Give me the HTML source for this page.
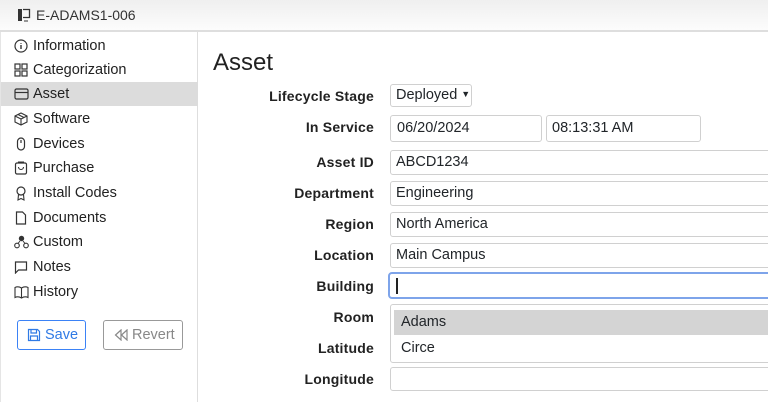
<!DOCTYPE html>
<html><head><style>
*{box-sizing:border-box;margin:0;padding:0}
body{width:768px;height:402px;overflow:hidden;background:#fff;font-family:"Liberation Sans",sans-serif;color:#212529;position:relative}
.hdr{position:absolute;left:0;top:0;width:768px;height:32px;background:linear-gradient(#efefef,#fcfcfc);border-bottom:2px solid #dedede;font-size:14px;color:#333}
.hdr span{position:absolute;left:36px;top:7px}
.side{position:absolute;left:0;top:32px;width:198px;height:370px;border-right:1px solid #dedede;border-left:1px solid #e5e5e5}
.nav{position:absolute;left:0;width:197px;height:24px;font-size:14.5px;line-height:24px;padding-left:32px;color:#222}
.nav.act{background:#dcdcdc}
.nav svg{position:absolute;left:13px;top:5px}
.btn{position:absolute;top:288px;height:30px;border-radius:3px;font-size:14.5px;line-height:28px}
.lbl{position:absolute;right:394px;font-size:14px;font-weight:bold;color:#222;text-align:right;letter-spacing:0.2px}
.in{position:absolute;left:390px;height:25px;border:1px solid #d0d0d0;border-radius:3px;font-size:14.5px;line-height:23px;padding-left:5px;background:#fff;width:390px}
</style></head><body>
<div class="hdr"><svg style="position:absolute;left:17px;top:8px" width="14" height="15" viewBox="0 0 14 15"><rect x="1" y="1" width="4" height="12" fill="#333"/><path d="M6 1.5h6.5v8H6" fill="none" stroke="#333" stroke-width="1.3"/><path d="M7 13h4" stroke="#333"/></svg><span>E-ADAMS1-006</span></div>
<div class="side">
<div class="nav" style="top:2px"><svg width="14" height="14"><circle cx="7" cy="7" r="6" fill="none" stroke="#333" stroke-width="1.2"/><path d="M7 6v4M7 4v.8" stroke="#333" stroke-width="1.4"/></svg>Information</div>
<div class="nav" style="top:26px"><svg width="14" height="14"><g fill="none" stroke="#333" stroke-width="1.2"><rect x="1" y="1" width="5" height="5"/><rect x="8" y="1" width="5" height="5"/><rect x="1" y="8" width="5" height="5"/><rect x="8" y="8" width="5" height="5"/></g></svg>Categorization</div>
<div class="nav act" style="top:50px"><svg width="15" height="14"><rect x="1" y="2" width="13" height="10" rx="1.5" fill="none" stroke="#333" stroke-width="1.2"/><path d="M1 5.5h13" stroke="#333" stroke-width="1.2"/></svg>Asset</div>
<div class="nav" style="top:75px"><svg width="14" height="14"><path d="M7 1l6 3v6l-6 3-6-3V4zM1 4l6 3 6-3M7 7v6M4 2.5l6 3" fill="none" stroke="#333" stroke-width="1.1"/></svg>Software</div>
<div class="nav" style="top:100px"><svg width="14" height="14"><rect x="3.5" y="1" width="7" height="12" rx="3.5" fill="none" stroke="#333" stroke-width="1.2"/><path d="M7 3v3" stroke="#333" stroke-width="1.2"/></svg>Devices</div>
<div class="nav" style="top:124px"><svg width="14" height="14"><rect x="1.5" y="2" width="11" height="11" rx="1.5" fill="none" stroke="#333" stroke-width="1.2"/><path d="M4.5 2V1h5v1M4.5 6a2.5 2.5 0 005 0" fill="none" stroke="#333" stroke-width="1.1"/></svg>Purchase</div>
<div class="nav" style="top:149px"><svg width="14" height="15"><circle cx="7" cy="5" r="4" fill="none" stroke="#333" stroke-width="1.2"/><path d="M4.5 8.5L4 14l3-1.5 3 1.5-.5-5.5" fill="none" stroke="#333" stroke-width="1.1"/></svg>Install Codes</div>
<div class="nav" style="top:174px"><svg width="14" height="14"><path d="M2.5 1h6l3 3v9h-9z" fill="none" stroke="#333" stroke-width="1.2"/></svg>Documents</div>
<div class="nav" style="top:198px"><svg width="15" height="14"><circle cx="7.5" cy="3.5" r="2.7" fill="#333"/><circle cx="3" cy="10.5" r="2.3" fill="none" stroke="#333" stroke-width="1.1"/><circle cx="12" cy="10.5" r="2.3" fill="none" stroke="#333" stroke-width="1.1"/><path d="M6 6l-2 2.5M9 6l2 2.5" stroke="#333"/></svg>Custom</div>
<div class="nav" style="top:223px"><svg width="14" height="14"><path d="M1.5 2h11v8h-8l-3 3z" fill="none" stroke="#333" stroke-width="1.2"/></svg>Notes</div>
<div class="nav" style="top:248px"><svg width="15" height="14"><path d="M1 2.5c2-1 4-1 6.5.5 2.5-1.5 4.5-1.5 6.5-.5v10c-2-1-4-1-6.5.5-2.5-1.5-4.5-1.5-6.5-.5zM7.5 3v10" fill="none" stroke="#333" stroke-width="1.1"/></svg>History</div>
<div class="btn" style="left:16px;width:69px;border:1px solid #3b82f6;color:#2f7ae5;padding-left:27px"><svg style="position:absolute;left:9px;top:7px" width="14" height="14"><path d="M1.5 1.5h9l2 2v9h-11z M4 1.5v3.5h5.5V1.5 M3.5 12.5V8h7v4.5" fill="none" stroke="#2f7ae5" stroke-width="1.2"/></svg>Save</div>
<div class="btn" style="left:102px;width:80px;border:1px solid #999;color:#888;padding-left:28px"><svg style="position:absolute;left:10px;top:8px" width="15" height="12"><path d="M7 1L1.5 6 7 11zM13 1L7.5 6 13 11z" fill="none" stroke="#888" stroke-width="1.2"/></svg>Revert</div>
</div>
<div style="position:absolute;left:213px;top:49px;font-size:24px;color:#222">Asset</div>
<div class="lbl" style="top:88px">Lifecycle Stage</div>
<div class="lbl" style="top:119px">In Service</div>
<div class="lbl" style="top:154px">Asset ID</div>
<div class="lbl" style="top:185px">Department</div>
<div class="lbl" style="top:216px">Region</div>
<div class="lbl" style="top:247px">Location</div>
<div class="lbl" style="top:278px">Building</div>
<div class="lbl" style="top:309px">Room</div>
<div class="lbl" style="top:340px">Latitude</div>
<div class="lbl" style="top:371px">Longitude</div>
<div class="in" style="top:84px;width:82px;height:23px;line-height:21px">Deployed <span style="font-size:9px;position:relative;top:-2px">▼</span></div>
<div class="in" style="top:115px;width:152px;height:27px;line-height:25px;padding-left:6px">06/20/2024</div>
<div class="in" style="top:115px;left:546px;width:155px;height:27px;line-height:25px">08:13:31 AM</div>
<div class="in" style="top:150px">ABCD1234</div>
<div class="in" style="top:181px">Engineering</div>
<div class="in" style="top:212px">North America</div>
<div class="in" style="top:243px">Main Campus</div>
<div class="in" style="top:272px;left:388px;height:27px;border:2px solid #7ea4ea;border-radius:4px"><span style="position:absolute;left:6px;top:4px;width:1.5px;height:16px;background:#222"></span></div>
<div class="in" style="top:304px;height:59px;padding:0"><div style="position:absolute;left:3px;top:5px;right:0;height:25px;background:#d4d4d4;padding-left:7px;line-height:25px">Adams</div><div style="position:absolute;left:10px;top:31px;line-height:25px">Circe</div></div>
<div class="in" style="top:367px;height:24px"></div>
</body></html>
